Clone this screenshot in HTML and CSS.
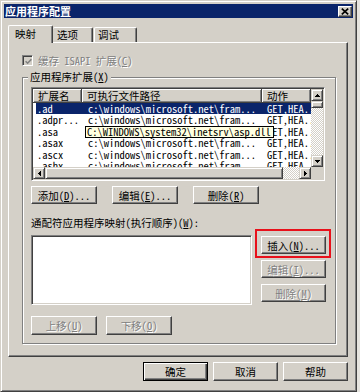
FILE: index.html
```html
<!DOCTYPE html>
<html lang="zh-CN">
<head>
<meta charset="utf-8">
<title>应用程序配置</title>
<link rel="stylesheet" href="styles.css">
</head>
<body>
<div class="window">
  <div class="titlebar">
    <span class="title">应用程序配置</span>
    <span class="close"><svg width="8" height="7" viewBox="0 0 8 7"><path d="M0.8 0.6L7.2 6.4M7.2 0.6L0.8 6.4" stroke="#000" stroke-width="1.7"/></svg></span>
  </div>
  <div class="content">
    <div class="tabs">
      <div class="tab active">映射</div>
      <div class="tab t2">选项</div>
      <div class="tab t3">调试</div>
    </div>
    <div class="panel">
      <div class="check-row">
        <span class="checkbox"><svg width="7" height="7" viewBox="0 0 7 7"><path d="M0.6 3.2L2.6 5.2L6.4 1.2" fill="none" stroke="#808080" stroke-width="1.6"/></svg></span>
        <span class="dis-text">缓存 ISAPI 扩展(<u>C</u>)</span>
      </div>
      <div class="group">
        <div class="legend">应用程序扩展(<u>X</u>)</div>
        <div class="listview">
          <div class="lv-main">
            <div class="lv-header">
              <div class="hcell">扩展名</div>
              <div class="hcell">可执行文件路径</div>
              <div class="hcell">动作</div>
            </div>
            <div class="lv-rows">
              <div class="row sel"><span class="c1">.ad</span><span class="c2">c:\windows\microsoft.net\fram...</span><span class="c3">GET,HEA...</span></div>
              <div class="row"><span class="c1">.adpr...</span><span class="c2">c:\windows\microsoft.net\fram...</span><span class="c3">GET,HEA...</span></div>
              <div class="row"><span class="c1">.asa</span><span class="c2">c:\windows\system32\inetsrv\a...</span><span class="c3">GET,HEA...</span></div>
              <div class="row"><span class="c1">.asax</span><span class="c2">c:\windows\microsoft.net\fram...</span><span class="c3">GET,HEA...</span></div>
              <div class="row"><span class="c1">.ascx</span><span class="c2">c:\windows\microsoft.net\fram...</span><span class="c3">GET,HEA...</span></div>
              <div class="row"><span class="c1">.ashx</span><span class="c2">c:\windows\microsoft.net\fram...</span><span class="c3">GET,HEA...</span></div>
            </div>
            <div class="tooltip">C:\WINDOWS\system32\inetsrv\asp.dll</div>
          </div>
          <div class="vscroll">
            <div class="sb-btn"><svg width="5" height="3" viewBox="0 0 5 3"><path d="M2 0h1v1h1v1h1v1H0V2h1V1h1z"/></svg></div>
            <div class="sb-thumb v"></div>
            <div class="sb-track"></div>
            <div class="sb-btn"><svg width="5" height="3" viewBox="0 0 5 3"><path d="M0 0h5v1H4v1H3v1H2V2H1V1H0z"/></svg></div>
          </div>
          <div class="hscroll">
            <div class="sb-btn"><svg width="3" height="5" viewBox="0 0 3 5"><path d="M3 0v5H2V4H1V3H0V2h1V1h1V0z"/></svg></div>
            <div class="sb-thumb h"></div>
            <div class="sb-track"></div>
            <div class="sb-btn"><svg width="3" height="5" viewBox="0 0 3 5"><path d="M0 0h1v1h1v1h1v1H2v1H1v1H0z"/></svg></div>
          </div>
          <div class="corner"></div>
        </div>
        <div class="btn-row">
          <button class="btn">添加(<u>D</u>)...</button>
          <button class="btn">编辑(<u>E</u>)...</button>
          <button class="btn">删除(<u>R</u>)</button>
        </div>
        <div class="wild-label">通配符应用程序映射(执行顺序)(<u>W</u>):</div>
        <div class="wild">
          <div class="wild-list"></div>
          <div class="side-btns">
            <div class="marked">
              <button class="btn side">插入(<u>N</u>)...</button>
              <span class="redbox"></span>
            </div>
            <button class="btn side dis">编辑(<u>I</u>)...</button>
            <button class="btn side dis">删除(<u>M</u>)</button>
          </div>
        </div>
        <div class="btn-row updown">
          <button class="btn dis">上移(<u>U</u>)</button>
          <button class="btn dis">下移(<u>O</u>)</button>
        </div>
      </div>
    </div>
    <div class="dialog-btns">
      <button class="btn dlg default">确定</button>
      <button class="btn dlg">取消</button>
      <button class="btn dlg">帮助</button>
    </div>
  </div>
</div>
</body>
</html>
```
FILE: styles.css
```css
* { box-sizing: border-box; }
html, body { margin: 0; padding: 0; }
body {
  width: 360px;
  height: 392px;
  overflow: hidden;
  background: #e6e4df;
  font-family: "Noto Sans Mono CJK SC", "Noto Sans CJK SC", sans-serif;
  font-size: 10.5px;
  color: #000;
}
u { text-decoration: underline; text-underline-offset: 1px; }

.window {
  width: 357px;
  height: 392px;
  background: #d4d0c8;
  border: 1px solid;
  border-color: #d4d0c8 #404040 #404040 #d4d0c8;
  box-shadow: inset 1px 1px 0 #fff, inset -1px -1px 0 #808080;
  padding: 3px;
  display: flex;
  flex-direction: column;
}

.titlebar {
  height: 14px;
  background: #0a246a;
  display: flex;
  align-items: center;
  justify-content: space-between;
  padding: 0 1px 0 1px;
}
.title {
  color: #fff;
  font-family: "Noto Sans CJK SC", sans-serif;
  font-weight: bold;
  font-size: 11px;
  line-height: 14px;
}
.close {
  width: 14px;
  height: 11px;
  background: #d4d0c8;
  border: 1px solid;
  border-color: #fff #404040 #404040 #fff;
  box-shadow: inset -1px -1px 0 #808080;
  display: flex;
  align-items: center;
  justify-content: center;
}
.close svg { display: block; margin-left: -1px; }

.content {
  flex: 1;
  padding: 7px 5px 0 4px;
  display: flex;
  flex-direction: column;
}

.tabs {
  display: flex;
  align-items: flex-end;
  height: 17px;
  position: relative;
  z-index: 1;
}
.tab {
  height: 15px;
  line-height: 14px;
  background: #d4d0c8;
  border-top: 1px solid #fff;
  border-left: 1px solid #fff;
  border-right: 1px solid #404040;
  box-shadow: inset -1px 0 0 #808080;
  border-radius: 2px 2px 0 0;
  padding-left: 3px;
  white-space: nowrap;
}
.tab.active {
  width: 45px;
  height: 18px;
  margin-bottom: -1px;
  line-height: 16px;
  padding-left: 6px;
}
.tab.t2 { width: 40px; border-left: none; padding-left: 4px; }
.tab.t3 { width: 43px; margin-left: 1px; }

.panel {
  height: 315px;
  background: #d4d0c8;
  border-top: 1px solid #fff;
  border-left: 1px solid #fff;
  border-right: 1px solid #404040;
  border-bottom: 1px solid #404040;
  box-shadow: inset -1px -1px 0 #808080;
  padding: 12px 11px 12px 13px;
}

.check-row {
  height: 11px;
  display: flex;
  align-items: center;
  gap: 5px;
}
.checkbox {
  width: 11px;
  height: 11px;
  flex: none;
  background: #d4d0c8;
  border: 1px solid;
  border-color: #808080 #fff #fff #808080;
  box-shadow: inset 1px 1px 0 #404040, inset -1px -1px 0 #d4d0c8;
  display: flex;
  align-items: center;
  justify-content: center;
}
.checkbox svg { display: block; margin: 1px 0 0 1px; }
.dis-text {
  color: #808080;
  text-shadow: 1px 1px 0 #fff;
  line-height: 12px;
  white-space: nowrap;
}

.group {
  margin-top: 11px;
  height: 267px;
  border: 1px solid #808080;
  box-shadow: inset 1px 1px 0 #fff, 1px 1px 0 #fff;
  padding: 0 9px 7px 8px;
}
.legend {
  width: fit-content;
  height: 12px;
  line-height: 12px;
  margin: -7px 0 4px -3px;
  padding: 0 2px;
  background: #d4d0c8;
  white-space: nowrap;
}

.listview {
  width: 294px;
  height: 94px;
  background: #fff;
  border: 1px solid;
  border-color: #808080 #fff #fff #808080;
  box-shadow: inset 1px 1px 0 #404040, inset -1px -1px 0 #d4d0c8;
  padding: 1px;
  display: grid;
  grid-template-columns: 278px 12px;
  grid-template-rows: 78px 12px;
}
.lv-main {
  position: relative;
  overflow: hidden;
}
.lv-header {
  height: 14px;
  display: grid;
  grid-template-columns: 49px 180px 1fr;
}
.hcell {
  background: #d4d0c8;
  border-right: 1px solid #404040;
  border-bottom: 1px solid #404040;
  box-shadow: inset 1px 1px 0 #fff, inset -1px -1px 0 #808080;
  padding-left: 5px;
  line-height: 13px;
  white-space: nowrap;
  overflow: hidden;
}
.lv-rows {
  height: 64px;
  overflow: hidden;
}
.row {
  display: grid;
  grid-template-columns: 46px 180px 1fr;
  margin-left: 3px;
  height: 11.4px;
  line-height: 11.4px;
  white-space: nowrap;
}
.row span { overflow: hidden; }
.row .c1 { padding-left: 1px; }
.row .c2 { padding-left: 6px; }
.row .c3 { padding-left: 5px; }
.row.sel { background: #0a246a; color: #fff; }

.tooltip {
  position: absolute;
  left: 52px;
  top: 37px;
  width: 189px;
  height: 12px;
  background: #ffffe1;
  border: 1px solid #000;
  padding-left: 1px;
  line-height: 10px;
  white-space: nowrap;
}

.vscroll {
  display: flex;
  flex-direction: column;
}
.hscroll {
  display: flex;
}
.sb-btn, .sb-thumb {
  background: #d4d0c8;
  border: 1px solid;
  border-color: #d4d0c8 #404040 #404040 #d4d0c8;
  box-shadow: inset 1px 1px 0 #fff, inset -1px -1px 0 #808080;
}
.sb-btn {
  width: 12px;
  height: 12px;
  flex: none;
  display: flex;
  align-items: center;
  justify-content: center;
}
.sb-btn svg { display: block; fill: #000; }
.sb-thumb.v { height: 7px; flex: none; }
.sb-thumb.h { width: 238px; flex: none; }
.sb-track {
  flex: 1;
  background: repeating-conic-gradient(#fff 0 25%, #d4d0c8 0 50%) 0 0 / 2px 2px;
}
.corner { background: #d4d0c8; }

.btn {
  appearance: none;
  margin: 0;
  padding: 0;
  font: inherit;
  color: #000;
  background: #d4d0c8;
  border: 1px solid;
  border-color: #fff #404040 #404040 #fff;
  box-shadow: inset -1px -1px 0 #808080;
  height: 18px;
  line-height: 15px;
  white-space: nowrap;
}
.btn.dis {
  color: #808080;
  text-shadow: 1px 1px 0 #fff;
}

.btn-row {
  margin-top: 5px;
  display: flex;
  gap: 15px;
}
.btn-row .btn { width: 66px; }

.wild-label {
  margin-top: 13px;
  height: 12px;
  line-height: 12px;
  white-space: nowrap;
}
.wild {
  margin-top: 6px;
  display: flex;
  gap: 9px;
}
.wild-list {
  width: 222px;
  height: 70px;
  background: #fff;
  border: 1px solid;
  border-color: #808080 #fff #fff #808080;
  box-shadow: inset 1px 1px 0 #404040, inset -1px -1px 0 #d4d0c8;
}
.side-btns {
  padding-top: 1px;
  display: flex;
  flex-direction: column;
  gap: 6px;
}
.btn.side { width: 65px; display: block; }
.marked { position: relative; }
.redbox {
  position: absolute;
  left: -6px;
  top: -7px;
  right: -5px;
  bottom: -4px;
  border: 2px solid #e8101a;
}

.btn-row.updown {
  margin-top: 11px;
  gap: 9px;
}
.btn-row.updown .btn { height: 19px; }

.dialog-btns {
  margin-top: 5px;
  display: flex;
  justify-content: flex-end;
  gap: 5px;
}
.btn.dlg { width: 65px; height: 19px; line-height: 16px; }
.btn.default {
  border: 1px solid #000;
  box-shadow: inset 1px 1px 0 #fff, inset -1px -1px 0 #404040, inset -2px -2px 0 #808080;
}
```
